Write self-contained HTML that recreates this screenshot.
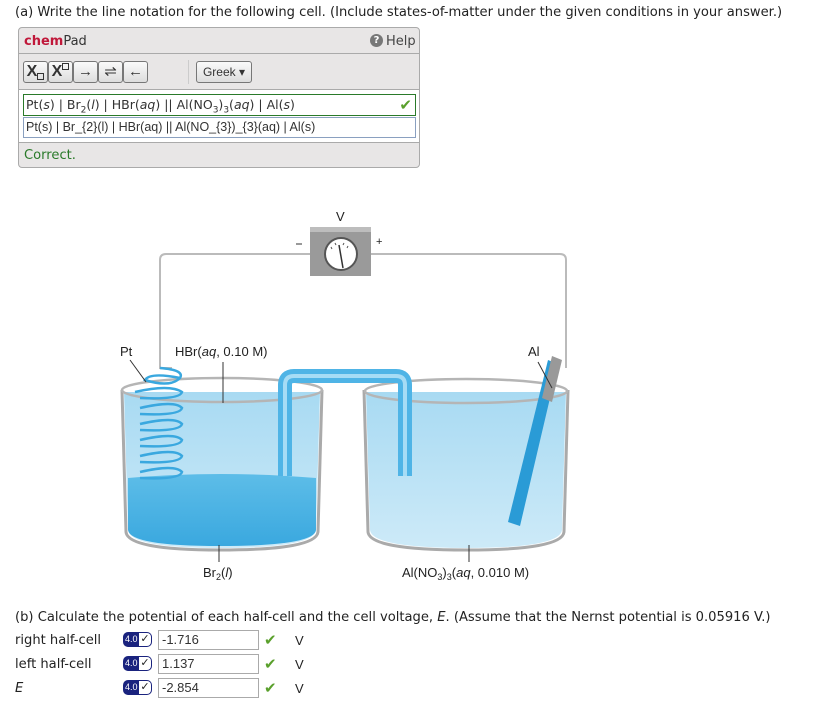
<!DOCTYPE html>
<html><head><style>
body{margin:0;width:831px;height:711px;background:#fff;font-family:"DejaVu Sans",Verdana,sans-serif;font-size:13.1px;color:#222;position:relative;overflow:hidden}
.a{position:absolute}
.ar{font-family:"Liberation Sans",Arial,sans-serif}
.btn{position:absolute;top:61px;height:22px;border:1px solid #777;border-radius:3px;background:linear-gradient(#fafafa,#ddd);box-sizing:border-box;text-align:center;line-height:20px;font-family:"Liberation Sans",Arial,sans-serif;font-size:15px;color:#333;overflow:hidden}
.sq{display:inline-block;width:5px;height:5px;border:1px solid #333;vertical-align:middle}
.badge{position:absolute;left:123px;width:29px;height:15px;border-radius:5px;background:#1a237e;color:#fff;font-size:9px;font-family:"Liberation Sans",Arial,sans-serif;line-height:15px;padding-left:2px;box-sizing:border-box}
.badge span{position:absolute;right:1px;top:1px;width:12px;height:13px;background:#fff;border-radius:0 4px 4px 0;color:#222;font-size:11px;line-height:13px;text-align:center}
.inp{position:absolute;left:158px;width:101px;height:20px;border:1px solid #aaa;box-sizing:border-box;font-family:"Liberation Sans",Arial,sans-serif;font-size:13px;line-height:18px;padding-left:3px;color:#333}
.ck{position:absolute;left:264px;color:#5aa02c;font-size:15px}
</style></head><body>
<div class="a" style="left:15px;top:5px">(a) Write the line notation for the following cell. (Include states-of-matter under the given conditions in your answer.)</div>
<div class="a" style="left:18px;top:27px;width:402px;height:141px;border:1px solid #aaa;border-radius:4px;background:#e8e6e6;box-sizing:border-box"></div>
<div class="a" style="left:24px;top:34px;font-size:13px"><span style="color:#c0183a;font-weight:bold">chem</span><span style="color:#333">Pad</span></div>
<div class="a" style="left:370px;top:34px;width:13px;height:13px;border-radius:50%;background:#777;color:#fff;font-size:10px;text-align:center;line-height:13px;font-weight:bold">?</div>
<div class="a" style="left:386px;top:34px;font-size:13px;color:#444">Help</div>
<div class="a" style="left:19px;top:53px;width:400px;border-top:1px solid #aaa"></div>
<div class="btn" style="left:23px;width:25px;font-weight:bold;font-size:16px">X<span class="sq" style="vertical-align:-4px"></span></div>
<div class="btn" style="left:48px;width:25px;font-weight:bold;font-size:16px">X<span class="sq" style="vertical-align:6px"></span></div>
<div class="btn" style="left:73px;width:25px">→</div>
<div class="btn" style="left:98px;width:25px">⇌</div>
<div class="btn" style="left:123px;width:25px">←</div>
<div class="a" style="left:188px;top:60px;height:24px;border-left:1px solid #ccc"></div>
<div class="btn" style="left:196px;width:56px;font-size:12px">Greek ▾</div>
<div class="a" style="left:19px;top:89px;width:400px;height:52px;background:#fff;border-top:1px solid #aaa;border-bottom:1px solid #aaa"></div>
<div class="a" style="left:23px;top:94px;width:393px;height:22px;border:1px solid #2a7a2a;box-sizing:border-box;padding-left:2px;line-height:20px;font-size:12.5px;color:#333">Pt(<i>s</i>) | Br<sub style="font-size:9px">2</sub>(<i>l</i>) | HBr(<i>aq</i>) || Al(NO<sub style="font-size:9px">3</sub>)<sub style="font-size:9px">3</sub>(<i>aq</i>) | Al(<i>s</i>)<span style="position:absolute;right:3px;color:#5aa02c;font-size:15px">✔</span></div>
<div class="a ar" style="left:23px;top:117px;width:393px;height:21px;border:1px solid #8aa0c0;box-sizing:border-box;padding-left:2px;line-height:19px;font-size:12.5px;color:#333">Pt(s) | Br_{2}(l) | HBr(aq) || Al(NO_{3})_{3}(aq) | Al(s)</div>
<div class="a" style="left:24px;top:148px;color:#2a7a2a">Correct.</div>

<svg class="a" style="left:0;top:0" width="831" height="600">
<defs>
<linearGradient id="lq" x1="0" x2="0" y1="0" y2="1"><stop offset="0" stop-color="#a8daf2"/><stop offset="1" stop-color="#cdeaf8"/></linearGradient>
<linearGradient id="lq2" x1="0" x2="0" y1="0" y2="1"><stop offset="0" stop-color="#5dbde8"/><stop offset="1" stop-color="#3aa8df"/></linearGradient>
</defs>
<path d="M310 254 H166 Q160 254 160 260 V368 H172 M371 254 H560 Q566 254 566 260 V368" fill="none" stroke="#bbb" stroke-width="2"/>
<rect x="310" y="227" width="61" height="49" fill="#9a9a9a"/><rect x="310" y="227" width="61" height="5" fill="#bdbdbd"/>
<circle cx="341" cy="254" r="16" fill="#fff" stroke="#555" stroke-width="2"/>
<line x1="339" y1="245" x2="343" y2="268" stroke="#333" stroke-width="1.5"/>
<path d="M331 247 l1 2 M335 243 l1 2 M344 243 l-1 2 M348 246 l-1 2" stroke="#555"/>
<line x1="296" y1="244" x2="302" y2="244" stroke="#333"/>
<path d="M124 392 L128 530 Q130 548 220 548 Q314 548 316 530 L320 392 Z" fill="url(#lq)"/>
<path d="M128 478 Q220 470 316 478 L316 530 Q314 546 220 546 Q130 546 128 530 Z" fill="url(#lq2)"/>
<path d="M122 390 L126 532 Q128 550 220 550 Q316 550 318 532 L322 390" fill="none" stroke="#aaa" stroke-width="3"/>
<ellipse cx="222" cy="390" rx="100" ry="12" fill="none" stroke="#b5b5b5" stroke-width="2.5"/>
<path d="M366 392 L370 530 Q372 548 466 548 Q560 548 562 530 L566 392 Z" fill="url(#lq)"/>
<path d="M364 390 L368 532 Q370 550 466 550 Q562 550 564 532 L568 390" fill="none" stroke="#aaa" stroke-width="3"/>
<ellipse cx="466" cy="391" rx="101" ry="12" fill="none" stroke="#b5b5b5" stroke-width="2.5"/>
<path d="M285 476 V385 Q285 376 294 376 H396 Q405 376 405 385 V476" fill="none" stroke="#4fb4e6" stroke-width="14"/>
<path d="M285 476 V385 Q285 376 294 376 H396 Q405 376 405 385 V476" fill="none" stroke="#a6dcf5" stroke-width="4"/>
<g fill="none" stroke="#3aa8df" stroke-width="2.5">
<path d="M160 368 Q185 370 180 378 Q170 388 145 380 Q150 372 180 378"/>
<path d="M135 392 Q170 384 182 392 Q180 400 140 398 M140 408 Q175 400 182 408 Q180 416 140 414 M140 424 Q175 416 182 424 Q180 432 140 430 M140 440 Q175 432 182 440 Q180 448 140 446 M140 456 Q175 448 182 456 Q180 464 140 462 M140 472 Q175 464 182 472 Q180 480 140 478"/>
</g>
<path d="M548 360 L558 364 L520 526 L508 522 Z" fill="#2a9bd6"/>
<path d="M552 356 L562 360 L552 402 L542 398 Z" fill="#999"/>
<g stroke="#333" stroke-width="1">
<line x1="130" y1="360" x2="146" y2="382"/><line x1="223" y1="362" x2="223" y2="403"/><line x1="538" y1="362" x2="552" y2="388"/>
<line x1="219" y1="545" x2="219" y2="562"/><line x1="469" y1="545" x2="469" y2="562"/>
</g>
<g font-family="Liberation Sans,Arial,sans-serif" font-size="13" fill="#222">
<text x="336" y="221">V</text><text x="376" y="245" font-size="11">+</text>
<text x="120" y="356">Pt</text><text x="175" y="356">HBr(<tspan font-style="italic">aq</tspan>, 0.10 M)</text>
<text x="528" y="356">Al</text>
<text x="203" y="577">Br<tspan font-size="9" dy="3">2</tspan><tspan dy="-3">(</tspan><tspan font-style="italic">l</tspan>)</text>
<text x="402" y="577">Al(NO<tspan font-size="9" dy="3">3</tspan><tspan dy="-3">)</tspan><tspan font-size="9" dy="3">3</tspan><tspan dy="-3">(</tspan><tspan font-style="italic">aq</tspan>, 0.010 M)</text>
</g>
</svg>

<div class="a" style="left:15px;top:610px">(b) Calculate the potential of each half-cell and the cell voltage, <i>E</i>. (Assume that the Nernst potential is 0.05916 V.)</div>
<div class="a" style="left:15px;top:633px">right half-cell</div>
<div class="a" style="left:15px;top:657px">left half-cell</div>
<div class="a" style="left:15px;top:681px"><i>E</i></div>
<div class="badge" style="top:632px">4.0<span>✓</span></div>
<div class="badge" style="top:656px">4.0<span>✓</span></div>
<div class="badge" style="top:680px">4.0<span>✓</span></div>
<div class="inp" style="top:630px">-1.716</div>
<div class="inp" style="top:654px">1.137</div>
<div class="inp" style="top:678px">-2.854</div>
<div class="ck" style="top:631px">✔</div><div class="ck" style="top:655px">✔</div><div class="ck" style="top:679px">✔</div>
<div class="a ar" style="left:295px;top:633px;font-size:13px">V</div>
<div class="a ar" style="left:295px;top:657px;font-size:13px">V</div>
<div class="a ar" style="left:295px;top:681px;font-size:13px">V</div>
</body></html>
